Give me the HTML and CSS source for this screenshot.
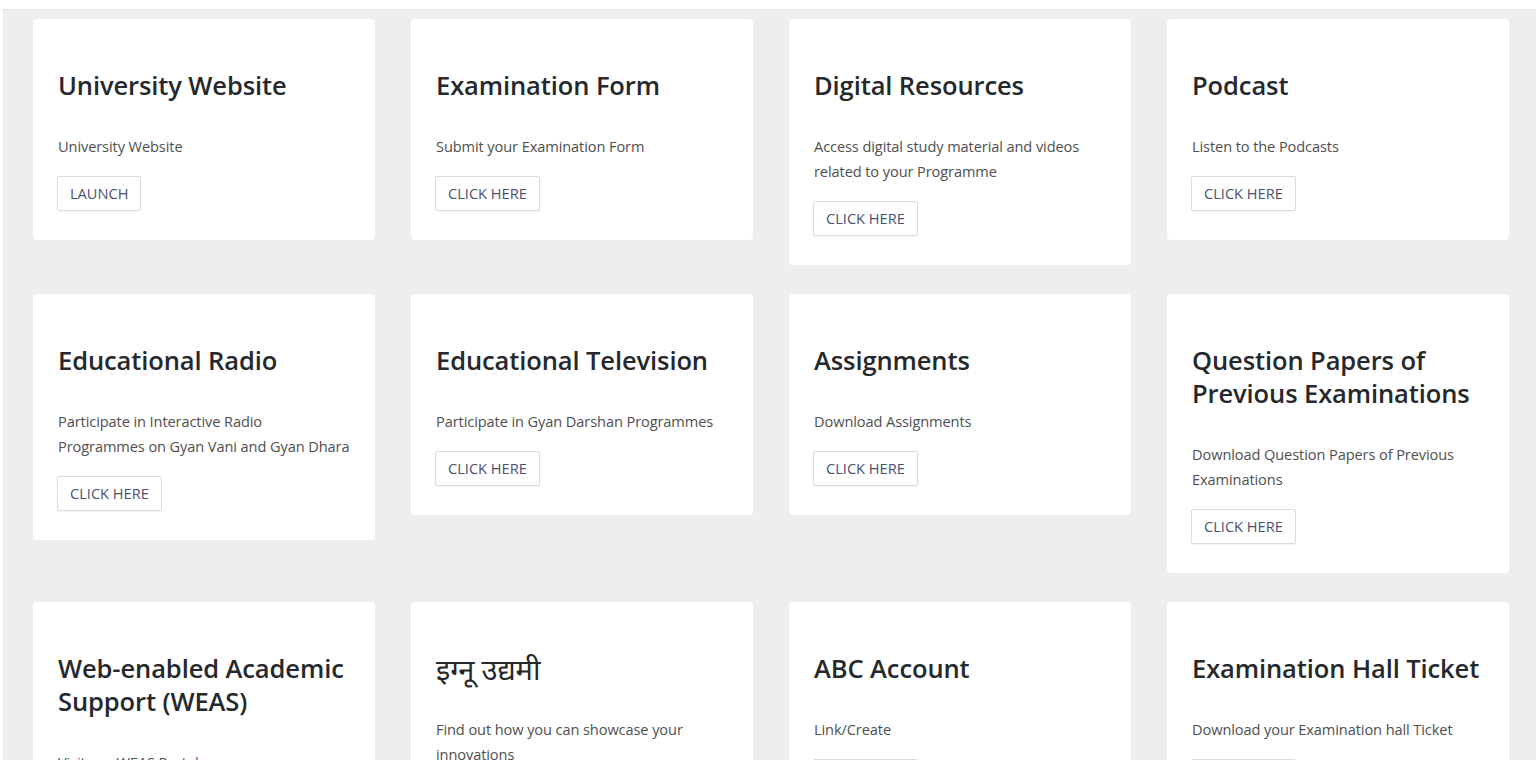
FILE: index.html
```html
<!DOCTYPE html>
<html lang="en">
<head>
<meta charset="utf-8">
<title>Services</title>
<link rel="stylesheet" href="styles.css">
</head>
<body>
<div class="page">
  <div class="grid">
    <div class="card">
      <h3 class="card-title">University Website</h3>
      <p class="card-text">University Website</p>
      <a class="btn" href="#">LAUNCH</a>
    </div>
    <div class="card">
      <h3 class="card-title">Examination Form</h3>
      <p class="card-text">Submit your Examination Form</p>
      <a class="btn" href="#">CLICK HERE</a>
    </div>
    <div class="card">
      <h3 class="card-title">Digital Resources</h3>
      <p class="card-text">Access digital study material and videos related to your Programme</p>
      <a class="btn" href="#">CLICK HERE</a>
    </div>
    <div class="card">
      <h3 class="card-title">Podcast</h3>
      <p class="card-text">Listen to the Podcasts</p>
      <a class="btn" href="#">CLICK HERE</a>
    </div>

    <div class="card">
      <h3 class="card-title">Educational Radio</h3>
      <p class="card-text">Participate in Interactive Radio Programmes on Gyan Vani and Gyan Dhara</p>
      <a class="btn" href="#">CLICK HERE</a>
    </div>
    <div class="card">
      <h3 class="card-title">Educational Television</h3>
      <p class="card-text">Participate in Gyan Darshan Programmes</p>
      <a class="btn" href="#">CLICK HERE</a>
    </div>
    <div class="card">
      <h3 class="card-title">Assignments</h3>
      <p class="card-text">Download Assignments</p>
      <a class="btn" href="#">CLICK HERE</a>
    </div>
    <div class="card">
      <h3 class="card-title">Question Papers of Previous Examinations</h3>
      <p class="card-text">Download Question Papers of Previous Examinations</p>
      <a class="btn" href="#">CLICK HERE</a>
    </div>

    <div class="card">
      <h3 class="card-title">Web-enabled Academic Support (WEAS)</h3>
      <p class="card-text">Visit our WEAS Portal</p>
      <a class="btn" href="#">CLICK HERE</a>
    </div>
    <div class="card">
      <h3 class="card-title hindi">इग्नू उद्यमी</h3>
      <p class="card-text">Find out how you can showcase your innovations</p>
      <a class="btn" href="#">CLICK HERE</a>
    </div>
    <div class="card">
      <h3 class="card-title">ABC Account</h3>
      <p class="card-text">Link/Create</p>
      <a class="btn" href="#">CLICK HERE</a>
    </div>
    <div class="card">
      <h3 class="card-title">Examination Hall Ticket</h3>
      <p class="card-text">Download your Examination hall Ticket</p>
      <a class="btn" href="#">CLICK HERE</a>
    </div>
  </div>
</div>
</body>
</html>
```

FILE: styles.css
```css
* { box-sizing: border-box; }

html, body {
  margin: 0;
  padding: 0;
  background: #ffffff;
  font-family: "Open Sans", "Noto Sans", "Noto Sans Devanagari", "Lohit Devanagari", "FreeSans", sans-serif;
  color: #212529;
}

.page {
  margin-top: 9px;
  margin-left: 3px;
  border-top: 1px solid #e2e2e2;
  background: #eeeeee;
  padding: 9px 27px 40px 30px;
  min-height: 760px;
}

.grid {
  display: grid;
  grid-template-columns: repeat(4, 342px);
  column-gap: 36px;
  row-gap: 29px;
  align-items: start;
}

.card {
  background: #ffffff;
  border-radius: 4px;
  padding: 25px 25px 29px 25px;
}

.card-title {
  margin: 25px 0 32px 0;
  font-size: 25.5px;
  line-height: 33px;
  font-weight: 560;
  color: #25282c;
  letter-spacing: -0.1px;
}

.card-title.hindi {
  font-weight: 400;
  font-size: 29px;
}

.card-text {
  margin: 0 0 17px 0;
  font-size: 14.6px;
  line-height: 25px;
  color: #4f4f4f;
  letter-spacing: -0.1px;
}

.btn {
  display: inline-block;
  margin-left: -1px;
  font-size: 14.6px;
  line-height: 21px;
  padding: 6px 12px;
  border: 1px solid #dcdcdc;
  border-radius: 2px;
  color: #4c5070;
  text-decoration: none;
  background: #ffffff;
  box-shadow: 0 1px 1px rgba(0,0,0,0.04);
}
```
